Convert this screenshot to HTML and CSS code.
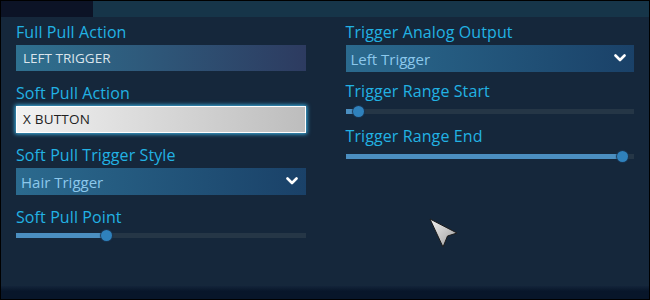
FILE: index.html
```html
<!DOCTYPE html>
<html lang="en">
<head>
  <meta charset="UTF-8">
  <title>Trigger Settings</title>
  <link rel="stylesheet" href="styles.css">
</head>
<body>

  <div class="frame">
    <div class="tabs">
      <div class="tab-active"></div>
    </div>

    <main class="panel">
      <div class="col">
        <div class="label first">Full Pull Action</div>
        <div class="action">LEFT TRIGGER</div>

        <div class="label">Soft Pull Action</div>
        <div class="action selected">X BUTTON</div>

        <div class="label">Soft Pull Trigger Style</div>
        <div class="dropdown">
          <span>Hair Trigger</span>
          <svg class="chev" width="12" height="8" viewBox="0 0 12 8"><path d="M1.5 1.5 L6 6 L10.5 1.5" fill="none" stroke="#fff" stroke-width="2.6" stroke-linecap="round" stroke-linejoin="round"/></svg>
        </div>

        <div class="label">Soft Pull Point</div>
        <div class="slider">
          <div class="fill" style="width: 31%"></div>
          <div class="knob" style="left: 31%"></div>
        </div>
      </div>

      <div class="col">
        <div class="label first">Trigger Analog Output</div>
        <div class="dropdown">
          <span>Left Trigger</span>
          <svg class="chev" width="12" height="8" viewBox="0 0 12 8"><path d="M1.5 1.5 L6 6 L10.5 1.5" fill="none" stroke="#fff" stroke-width="2.6" stroke-linecap="round" stroke-linejoin="round"/></svg>
        </div>

        <div class="label near">Trigger Range Start</div>
        <div class="slider">
          <div class="fill" style="width: 4.5%"></div>
          <div class="knob" style="left: 4.5%"></div>
        </div>

        <div class="label near">Trigger Range End</div>
        <div class="slider">
          <div class="fill" style="width: 96%"></div>
          <div class="knob" style="left: 96%"></div>
        </div>
      </div>
    </main>

    <div class="footer"></div>

    <svg class="cursor" width="32" height="32" viewBox="0 0 32 32">
      <defs>
        <linearGradient id="cg" x1="0" y1="0" x2="1" y2="1">
          <stop offset="0" stop-color="#f2f2f2"/>
          <stop offset="1" stop-color="#9a9a9a"/>
        </linearGradient>
      </defs>
      <path d="M2 2 L29 16 L19.5 19 L15 30 Z" fill="url(#cg)" stroke="#1b1b1b" stroke-width="1" stroke-linejoin="round"/>
    </svg>
  </div>

</body>
</html>
```

FILE: styles.css
```css
body {
  margin: 0;
  padding: 0;
  background-color: #000;
  font-family: "Open Sans", "DejaVu Sans", sans-serif;
}
.frame {
  position: relative;
  box-sizing: border-box;
  width: 650px;
  height: 300px;
  border: 1px solid #000;
  background-color: #15273b;
  display: flex;
  flex-direction: column;
}
.tabs {
  height: 16px;
  background-color: #163549;
  display: flex;
}
.tab-active {
  width: 92px;
  background-color: #0c1326;
}
.panel {
  flex: 1;
  display: flex;
  gap: 40px;
  padding: 0 15px;
}
.col {
  width: 289px;
  display: flex;
  flex-direction: column;
}
.col:first-child {
  width: 290px;
}
.label {
  color: #22b2e3;
  font-size: 16px;
  letter-spacing: 0.1px;
  line-height: 18px;
  margin-top: 13px;
  margin-bottom: 4px;
}
.label.first {
  margin-top: 6px;
}
.label.near {
  margin-top: 10px;
  margin-bottom: 6px;
}
.action {
  height: 26px;
  box-sizing: border-box;
  padding-left: 7px;
  line-height: 26px;
  font-size: 13.5px;
  color: #dbe5ec;
  background: linear-gradient(to right, #2f7190, #2d3b60);
}
.action.selected {
  height: 27px;
  line-height: 25px;
  padding-left: 6px;
  letter-spacing: 0.2px;
  color: #222;
  border: 1px solid #fff;
  background: linear-gradient(to right, #f2f2f2, #bdbdbd);
  box-shadow: 0 0 4px 1px #3fb6e8;
}
.dropdown {
  height: 27px;
  box-sizing: border-box;
  padding: 0 8px 0 5px;
  display: flex;
  justify-content: space-between;
  align-items: center;
  font-size: 15px;
  color: #8cc8ec;
  background: linear-gradient(to right, #2b6a8e, #1a4168);
}
.chev {
  margin-top: -2px;
}
.slider {
  position: relative;
  height: 5px;
  margin: 3px 0;
  background-color: #253646;
}
.fill {
  height: 5px;
  background-color: #4b8fc1;
}
.knob {
  position: absolute;
  top: -3px;
  width: 11px;
  height: 11px;
  margin-left: -5px;
  border-radius: 50%;
  background-color: #2f81bc;
  box-shadow: 0 0 1px 1px #1a3552;
}
.footer {
  height: 13px;
  background: linear-gradient(to bottom, #13243a, #08162a 40%);
}
.cursor {
  position: absolute;
  left: 427px;
  top: 216px;
}
```
